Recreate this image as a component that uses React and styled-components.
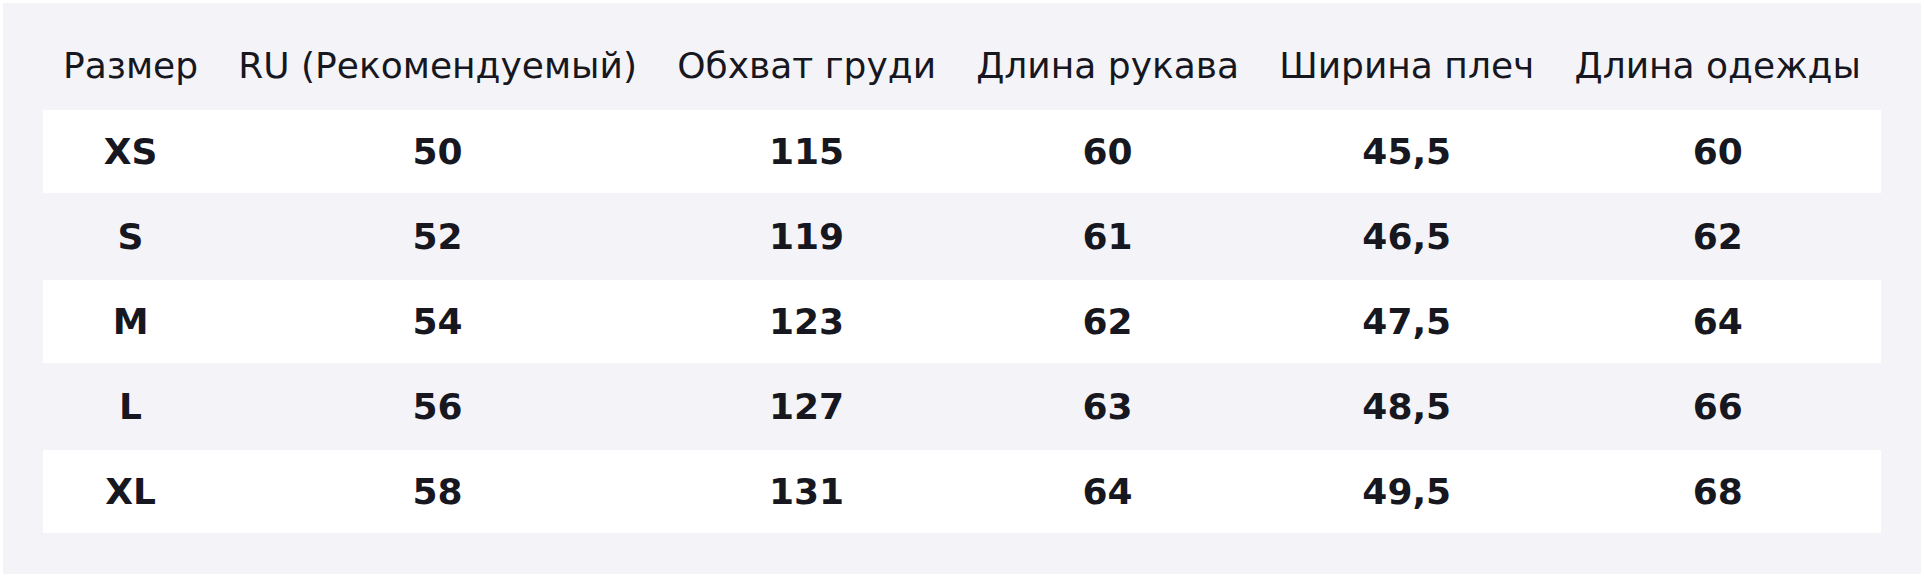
import React from 'react';
import styled, { createGlobalStyle } from 'styled-components';

const GlobalStyle = createGlobalStyle`
    body {
        margin: 0;
        background: #fff;
        font-family: "DejaVu Sans", "Noto Sans", sans-serif;
    }
`;

const Panel = styled.div`
    margin: 3px;
    padding: 40px 40px 39px;
    background-color: #f4f4f8;
`;

const Table = styled.table`
    width: 100%;
    border-collapse: separate;
    border-spacing: 0 2px;
    color: #17171f;
    font-size: 36px;
`;

const HeadCell = styled.th`
    padding: 0 20px 21px;
    font-weight: 400;
    white-space: nowrap;
    text-align: center;
    line-height: 42px;
`;

const Row = styled.tr`
    background-color: ${(p) => (p.$striped ? 'transparent' : '#fff')};
`;

const Cell = styled.td`
    height: 83px;
    padding: 0 20px;
    font-weight: 700;
    text-align: center;
    vertical-align: middle;
    white-space: nowrap;
    line-height: 42px;
`;

const columns = [
    'Размер',
    'RU (Рекомендуемый)',
    'Обхват груди',
    'Длина рукава',
    'Ширина плеч',
    'Длина одежды',
];

const sizes = [
    ['XS', '50', '115', '60', '45,5', '60'],
    ['S', '52', '119', '61', '46,5', '62'],
    ['M', '54', '123', '62', '47,5', '64'],
    ['L', '56', '127', '63', '48,5', '66'],
    ['XL', '58', '131', '64', '49,5', '68'],
];

const App = () => {
    return (
        <>
            <GlobalStyle />
            <Panel>
                <Table>
                    <thead>
                        <tr>
                            {columns.map((c) => (
                                <HeadCell key={c}>{c}</HeadCell>
                            ))}
                        </tr>
                    </thead>
                    <tbody>
                        {sizes.map((row, i) => (
                            <Row key={row[0]} $striped={i % 2 === 1}>
                                {row.map((v, j) => (
                                    <Cell key={j}>{v}</Cell>
                                ))}
                            </Row>
                        ))}
                    </tbody>
                </Table>
            </Panel>
        </>
    );
};

export default App;
